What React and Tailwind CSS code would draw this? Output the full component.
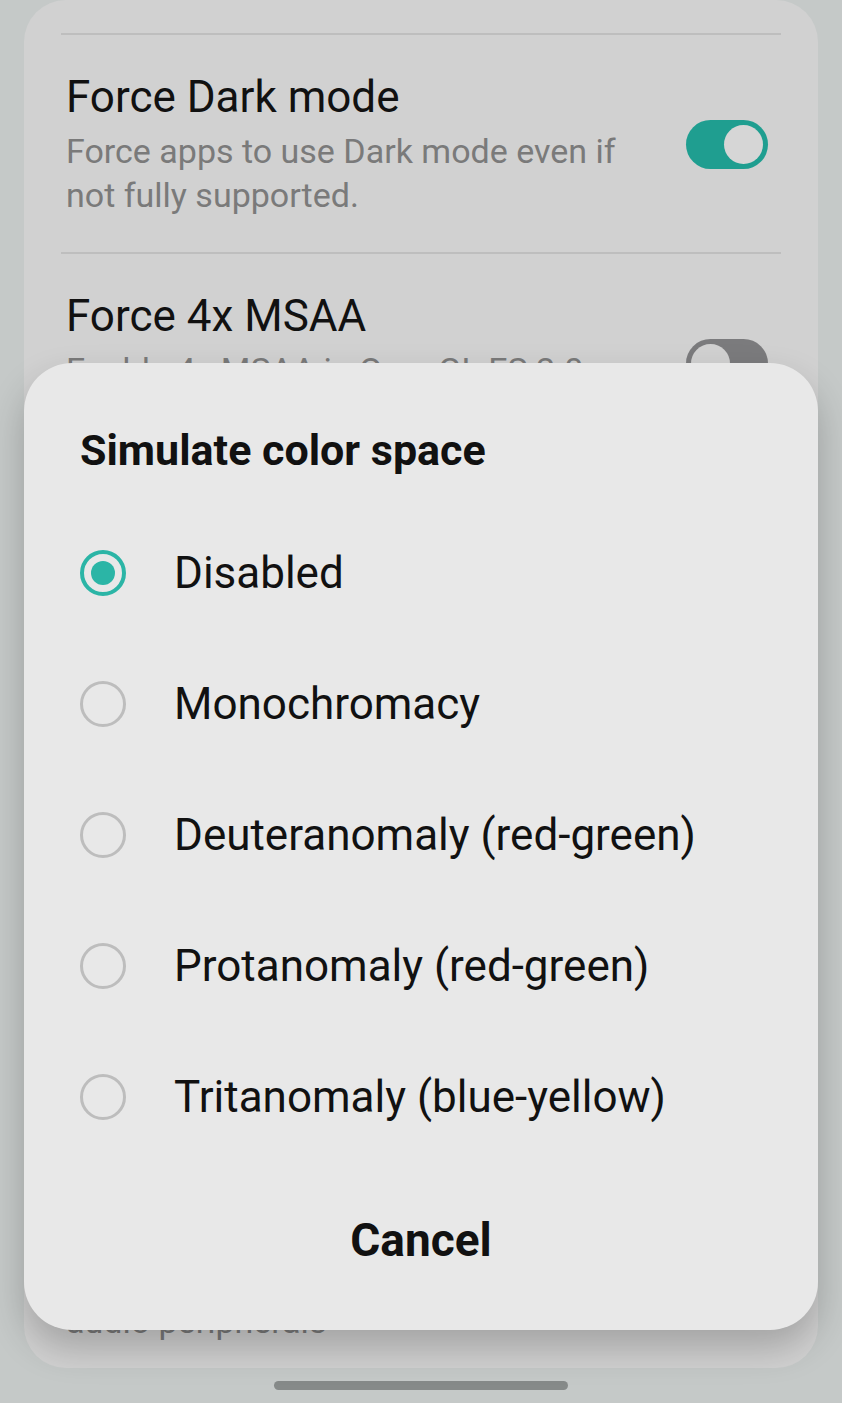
import React from "react";

const font = { fontFamily: "Roboto, 'Noto Sans', sans-serif" };

function Toggle({ on }) {
  return on ? (
    <div className="w-[82px] h-[49px] rounded-full bg-[#1f9e90] flex items-center justify-end px-[5px] shrink-0">
      <div className="w-[39px] h-[39px] rounded-full bg-[#d6d6d6]" />
    </div>
  ) : (
    <div className="w-[82px] h-[49px] rounded-full bg-[#7b7b7d] flex items-center justify-start px-[5px] shrink-0">
      <div className="w-[39px] h-[39px] rounded-full bg-[#d1d1d1]" />
    </div>
  );
}

function SettingRow({ title, sub, toggle, last }) {
  return (
    <div className={last ? "" : "border-b-2 border-[#bebebe]"}>
      <div className="flex items-center pl-[5px] pr-[13px] pt-[36px] pb-[35px]">
        <div className="flex-1 min-w-0 pr-[30px]">
          <div className="text-[44px] leading-[52px] text-[#111] whitespace-nowrap">{title}</div>
          {sub && (
            <div className="mt-[6px] text-[34px] leading-[44px] text-[#7a7a7a] whitespace-nowrap">{sub}</div>
          )}
        </div>
        {toggle !== undefined && <Toggle on={toggle} />}
      </div>
    </div>
  );
}

function Radio({ checked }) {
  return checked ? (
    <div className="w-[46px] h-[46px] rounded-full border-[4px] border-[#2bb5a6] flex items-center justify-center shrink-0">
      <div className="w-[24px] h-[24px] rounded-full bg-[#2bb5a6]" />
    </div>
  ) : (
    <div className="w-[46px] h-[46px] rounded-full border-[3px] border-[#bdbdbd] shrink-0" />
  );
}

export default function App() {
  const options = [
    "Disabled",
    "Monochromacy",
    "Deuteranomaly (red-green)",
    "Protanomaly (red-green)",
    "Tritanomaly (blue-yellow)",
  ];
  return (
    <div className="relative w-[842px] h-[1403px] overflow-hidden bg-[#c5c9c8]" style={font}>
      {/* background card */}
      <div className="mx-[24px] h-[1368px] rounded-[42px] bg-[#d1d1d1] overflow-hidden flex flex-col px-[37px] pt-[33px]">
        <div className="border-t-2 border-[#bebebe]" />
        <SettingRow
          title="Force Dark mode"
          sub={<>Force apps to use Dark mode even if<br />not fully supported.</>}
          toggle={true}
        />
        <SettingRow
          title="Force 4x MSAA"
          sub={<>Enable 4x MSAA in OpenGL ES 2.0<br />apps</>}
          toggle={false}
        />
        <SettingRow
          title="Disable HW overlays"
          sub={<>Always use GPU for screen<br />compositing</>}
          toggle={false}
        />
        <SettingRow title="Simulate color space" sub="Disabled" />
        <div className="mt-auto flex items-center pl-[5px] pr-[13px] pb-[25px]">
          <div className="flex-1 min-w-0 pr-[30px]">
            <div className="text-[44px] leading-[52px] text-[#111] whitespace-nowrap">Disable USB audio routing</div>
            <div className="mt-[6px] text-[34px] leading-[44px] text-[#7a7a7a] whitespace-nowrap">
              Disable automatic routing to USB
              <br />
              audio peripherals
            </div>
          </div>
          <Toggle on={false} />
        </div>
      </div>

      {/* home indicator */}
      <div className="mt-[13px] mx-auto w-[294px] h-[9px] rounded-full bg-[#868a89]" />

      {/* dialog */}
      <div className="absolute left-[24px] top-[363px] w-[794px] h-[967px] rounded-[48px] bg-[#e8e8e8] shadow-[0_18px_36px_rgba(0,0,0,0.22)] flex flex-col pl-[56px] pr-[40px] pt-[62px]">
        <div className="text-[43px] leading-[50px] font-bold text-[#111]">Simulate color space</div>
        <div className="mt-[32px] flex flex-col">
          {options.map((o, i) => (
            <div key={o} className="h-[131px] flex items-center gap-[48px]">
              <Radio checked={i === 0} />
              <span className="text-[44px] leading-[52px] text-[#111] whitespace-nowrap">{o}</span>
            </div>
          ))}
        </div>
        <div className="mt-[51px] -ml-[16px] text-center text-[46px] leading-[54px] font-bold text-[#111]">
          Cancel
        </div>
      </div>
    </div>
  );
}
